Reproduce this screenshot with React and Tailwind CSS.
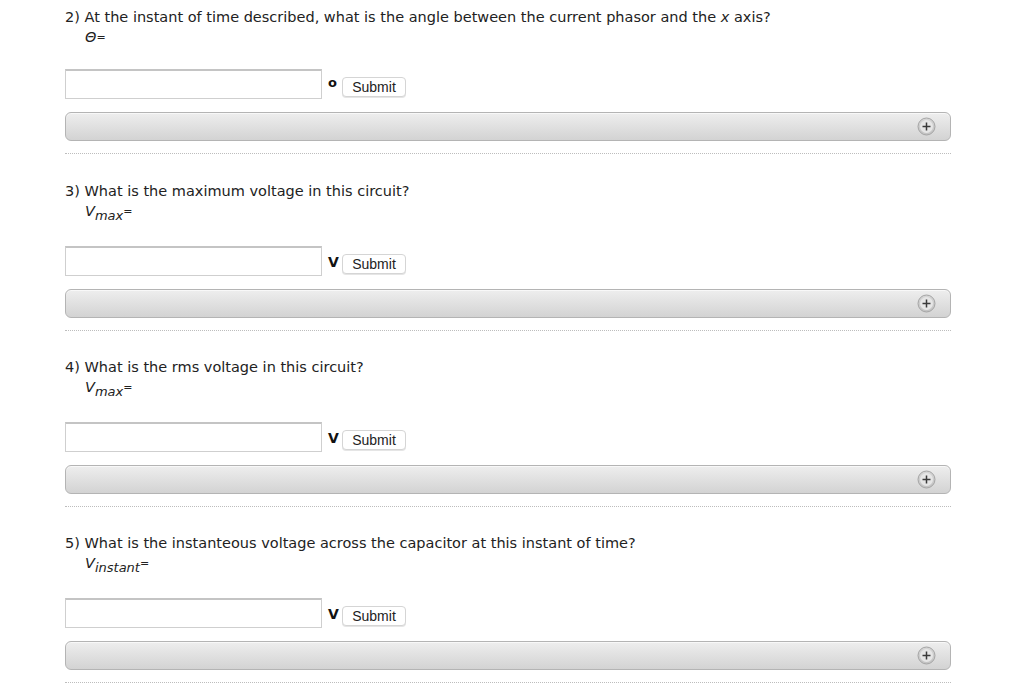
import React from "react";

const questions = [
  {
    n: 2,
    text: (
      <>
        At the instant of time described, what is the angle between the current phasor and the <i>x</i> axis?
      </>
    ),
    sym: "Θ",
    sub: null,
    unit: "o",
  },
  { n: 3, text: "What is the maximum voltage in this circuit?", sym: "V", sub: "max", unit: "V" },
  { n: 4, text: "What is the rms voltage in this circuit?", sym: "V", sub: "max", unit: "V" },
  {
    n: 5,
    text: "What is the instanteous voltage across the capacitor at this instant of time?",
    sym: "V",
    sub: "instant",
    unit: "V",
  },
];

const PlusIcon = () => (
  <svg width="19" height="19" viewBox="0 0 19 19">
    <defs>
      <linearGradient id="pg" x1="0" y1="0" x2="0" y2="1">
        <stop offset="0" stopColor="#d6d6d6" />
        <stop offset="1" stopColor="#c2c2c2" />
      </linearGradient>
    </defs>
    <circle cx="9.5" cy="9.5" r="8.5" fill="url(#pg)" stroke="#a5a5a5" strokeWidth="1" />
    <circle cx="9.5" cy="9.5" r="6.5" fill="#e6e6e6" />
    <path d="M9.5 5.5v8M5.5 9.5h8" stroke="#3a3a3a" strokeWidth="1.5" />
  </svg>
);

const Question = ({ q, first }) => {
  return (
    <div className={first ? "pb-[27px]" : "pb-[26px]"}>
      <div className="h-5 leading-5 text-[14.5px] text-[#222] whitespace-nowrap">
        {q.n}) {q.text}
      </div>
      <div className={`${q.sub ? "h-[23px]" : "h-5"} leading-5 pl-5 text-[14.5px] text-[#222]`}>
        <i>{q.sym}</i>
        {q.sub && (
          <span className="italic text-[13px] relative top-[4px]">{q.sub}</span>
        )}
        <span className="text-[11px] relative -top-[1px]">=</span>
      </div>
      <div className="mt-[22px] flex h-[30px]">
        <input
          type="text"
          className="w-[257px] h-[30px] border border-[#cfcfcf] border-t-[#c4c4c4] border-t-2 bg-white outline-none"
        />
        {q.unit === "o" ? (
          <span className="ml-[6px] w-[10px] font-bold text-[13px] text-[#111] leading-none mt-[7px]">o</span>
        ) : (
          <span className="ml-[6px] w-[10px] font-bold text-[14px] text-[#111] leading-none mt-[9px]">V</span>
        )}
        <button className="ml-[4px] mt-[8px] h-[20px] w-[64px] rounded-[4px] border border-[#d5d5d5] bg-white text-[14px] leading-none text-[#222] font-['Liberation_Sans',Arial,sans-serif] shadow-[0_1px_0_#e5e5e5]">
          Submit
        </button>
      </div>
      <div className="mt-[13px] h-[29px] rounded-[6px] border border-[#b4b4b4] bg-gradient-to-b from-[#eeeeee] to-[#d3d3d3] flex items-center justify-end pr-[14px] shadow-[inset_0_1px_0_#f8f8f8]">
        <PlusIcon />
      </div>
      <div className="mt-[12px] border-t border-dotted border-[#bdbdbd]" />
    </div>
  );
};

export default function App() {
  return (
    <div className="bg-white min-h-[695px] pl-[65px] pt-[7px] w-[951px] font-['DejaVu_Sans',Verdana,sans-serif]">
      {questions.map((q, i) => (
        <Question key={q.n} q={q} first={i === 0} />
      ))}
    </div>
  );
}
